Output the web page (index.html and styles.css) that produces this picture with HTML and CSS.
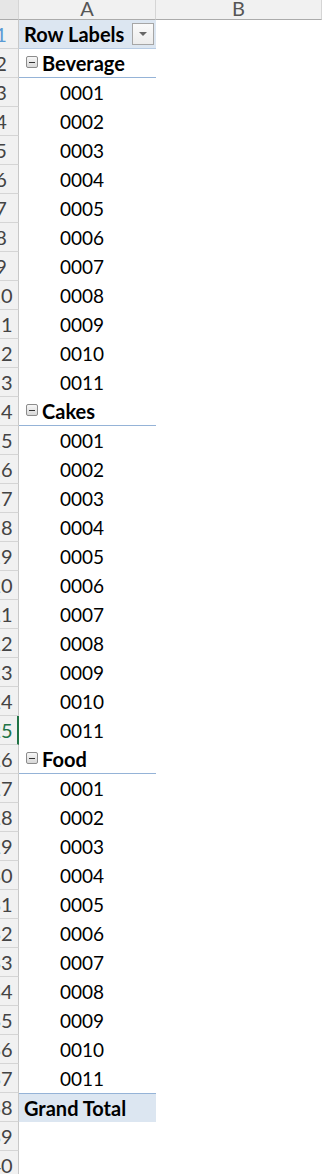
FILE: index.html
```html
<!DOCTYPE html>
<html lang="en">
<head>
    <meta charset="UTF-8">
    <meta name="viewport" content="width=device-width, initial-scale=1.0">
    <title>Pivot Table</title>
    <link rel="stylesheet" href="styles.css">
</head>
<body>
    <div class="sheet">
        <!-- column headers -->
        <div class="corner"></div>
        <div class="colhead">A</div>
        <div class="colhead">B</div>

        <div class="rownum first"><span>1</span></div>
        <div class="cell header">Row Labels<span class="dropdown"><i></i></span></div>
        <div class="cell"></div>

        <div class="rownum"><span>2</span></div>
        <div class="cell group"><span class="toggle"></span>Beverage</div>
        <div class="cell"></div>
        <div class="rownum"><span>3</span></div><div class="cell item">0001</div><div class="cell"></div>
        <div class="rownum"><span>4</span></div><div class="cell item">0002</div><div class="cell"></div>
        <div class="rownum"><span>5</span></div><div class="cell item">0003</div><div class="cell"></div>
        <div class="rownum"><span>6</span></div><div class="cell item">0004</div><div class="cell"></div>
        <div class="rownum"><span>7</span></div><div class="cell item">0005</div><div class="cell"></div>
        <div class="rownum"><span>8</span></div><div class="cell item">0006</div><div class="cell"></div>
        <div class="rownum"><span>9</span></div><div class="cell item">0007</div><div class="cell"></div>
        <div class="rownum"><span>10</span></div><div class="cell item">0008</div><div class="cell"></div>
        <div class="rownum"><span>11</span></div><div class="cell item">0009</div><div class="cell"></div>
        <div class="rownum"><span>12</span></div><div class="cell item">0010</div><div class="cell"></div>
        <div class="rownum"><span>13</span></div><div class="cell item">0011</div><div class="cell"></div>

        <div class="rownum"><span>14</span></div>
        <div class="cell group"><span class="toggle"></span>Cakes</div>
        <div class="cell"></div>
        <div class="rownum"><span>15</span></div><div class="cell item">0001</div><div class="cell"></div>
        <div class="rownum"><span>16</span></div><div class="cell item">0002</div><div class="cell"></div>
        <div class="rownum"><span>17</span></div><div class="cell item">0003</div><div class="cell"></div>
        <div class="rownum"><span>18</span></div><div class="cell item">0004</div><div class="cell"></div>
        <div class="rownum"><span>19</span></div><div class="cell item">0005</div><div class="cell"></div>
        <div class="rownum"><span>20</span></div><div class="cell item">0006</div><div class="cell"></div>
        <div class="rownum"><span>21</span></div><div class="cell item">0007</div><div class="cell"></div>
        <div class="rownum"><span>22</span></div><div class="cell item">0008</div><div class="cell"></div>
        <div class="rownum"><span>23</span></div><div class="cell item">0009</div><div class="cell"></div>
        <div class="rownum"><span>24</span></div><div class="cell item">0010</div><div class="cell"></div>
        <div class="rownum active"><span>25</span></div><div class="cell item">0011</div><div class="cell"></div>

        <div class="rownum"><span>26</span></div>
        <div class="cell group"><span class="toggle"></span>Food</div>
        <div class="cell"></div>
        <div class="rownum"><span>27</span></div><div class="cell item">0001</div><div class="cell"></div>
        <div class="rownum"><span>28</span></div><div class="cell item">0002</div><div class="cell"></div>
        <div class="rownum"><span>29</span></div><div class="cell item">0003</div><div class="cell"></div>
        <div class="rownum"><span>30</span></div><div class="cell item">0004</div><div class="cell"></div>
        <div class="rownum"><span>31</span></div><div class="cell item">0005</div><div class="cell"></div>
        <div class="rownum"><span>32</span></div><div class="cell item">0006</div><div class="cell"></div>
        <div class="rownum"><span>33</span></div><div class="cell item">0007</div><div class="cell"></div>
        <div class="rownum"><span>34</span></div><div class="cell item">0008</div><div class="cell"></div>
        <div class="rownum"><span>35</span></div><div class="cell item">0009</div><div class="cell"></div>
        <div class="rownum"><span>36</span></div><div class="cell item">0010</div><div class="cell"></div>
        <div class="rownum"><span>37</span></div><div class="cell item">0011</div><div class="cell"></div>

        <div class="rownum"><span>38</span></div>
        <div class="cell total">Grand Total</div>
        <div class="cell"></div>
        <div class="rownum"><span>39</span></div><div class="cell"></div><div class="cell"></div>
        <div class="rownum"><span>40</span></div><div class="cell"></div><div class="cell"></div>
    </div>
</body>
</html>
```

FILE: styles.css
```css
:root {
    --head-bg: #f1f1f1;
    --head-line: #d5d5d5;
    --pivot-fill: #dce6f1;
    --pivot-line: #95b3d7;
    --text-color: #000;
}

body {
    margin: 0;
    background-color: #fff;
    font-family: 'Lato', 'Liberation Sans', sans-serif;
    color: var(--text-color);
    overflow: hidden;
}

.sheet {
    display: grid;
    grid-template-columns: 19px 137px 166px;
    grid-template-rows: 20px;
    grid-auto-rows: 29px;
}

.corner,
.colhead {
    background-color: var(--head-bg);
    border-bottom: 1px solid #ababab;
    border-right: 1px solid var(--head-line);
    box-sizing: border-box;
}

.corner {
    background-color: #e6e6e6;
}

.colhead {
    font-size: 20px;
    line-height: 16px;
    text-align: center;
    color: #555;
    overflow: hidden;
}

.rownum {
    background-color: var(--head-bg);
    border-bottom: 1px solid var(--head-line);
    border-right: 1px solid #c8c8c8;
    box-sizing: border-box;
    overflow: hidden;
    display: flex;
    align-items: center;
    font-size: 20px;
    color: #444;
}

.rownum span {
    flex: none;
    width: 38px;
    margin-left: -18px;
    text-align: center;
}

.rownum.first span {
    color: #5b9bd5;
}

.rownum.active {
    border-right: 2px solid #217346;
}

.rownum.active span {
    color: #217346;
}

.cell {
    box-sizing: border-box;
    display: flex;
    align-items: center;
    font-size: 19px;
    white-space: nowrap;
}

.header {
    background-color: var(--pivot-fill);
    border-bottom: 1px solid #b8cce4;
    font-weight: bold;
    font-size: 20px;
    padding-left: 5px;
    position: relative;
}

.dropdown {
    position: absolute;
    right: 2px;
    top: 3px;
    width: 22px;
    height: 22px;
    box-sizing: border-box;
    border: 1px solid #a6a6a6;
    background: linear-gradient(#fafafa, #ececec);
    display: flex;
    align-items: center;
    justify-content: center;
}

.dropdown i {
    width: 0;
    height: 0;
    border-left: 4px solid transparent;
    border-right: 4px solid transparent;
    border-top: 4px solid #666;
}

.group {
    border-bottom: 1px solid var(--pivot-line);
    font-weight: bold;
    font-size: 20px;
    padding-left: 7px;
}

.toggle {
    width: 12px;
    height: 12px;
    box-sizing: border-box;
    border: 1px solid #8c8c8c;
    border-radius: 2px;
    background: linear-gradient(#f7f7f7, #d8d8d8);
    margin-right: 4px;
    position: relative;
    top: -1px;
}

.toggle::after {
    content: '';
    position: absolute;
    left: 2px;
    right: 2px;
    top: 5px;
    height: 1px;
    background-color: #333;
}

.item {
    padding-left: 41px;
}

.total {
    background-color: var(--pivot-fill);
    border-top: 1px solid var(--pivot-line);
    font-weight: bold;
    font-size: 20px;
    padding-left: 5px;
}
```
